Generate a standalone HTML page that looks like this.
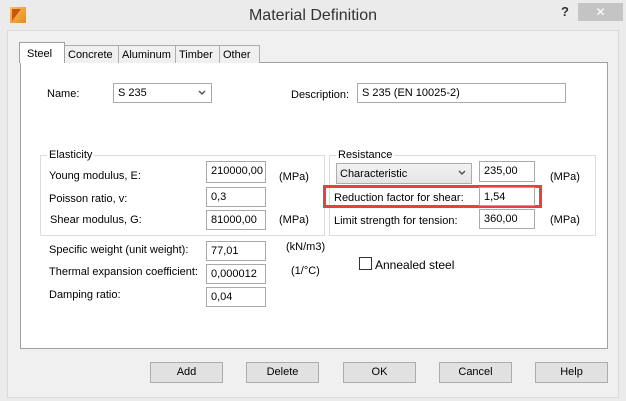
<!DOCTYPE html><html><head><style>
*{box-sizing:border-box}
body{margin:0;width:626px;height:401px;background:#ebebeb;font-family:"Liberation Sans",sans-serif;font-size:11px;color:#000;position:relative;overflow:hidden}
.a{position:absolute}
.in{position:absolute;background:#fff;border:1px solid #a9a9a9;height:20px;padding:3px 0 0 4px;font-size:11px}
.btn{position:absolute;top:362px;height:21px;width:73px;border:1px solid #adadad;background:#e1e1e1;text-align:center;line-height:19px}
.tab{position:absolute;top:45px;height:18px;border:1px solid #adadad;border-bottom:none;background:#f0f0f0;padding:3px 0 0 3px;font-size:11px}
.grp{position:absolute;border:1px solid #dcdcdc}
.gl{position:absolute;top:-7px;left:6px;background:#fff;padding:0 2px}
.chev{position:absolute;right:5px;top:6px}
</style></head><body>
<div class="a" style="left:10px;top:7px;width:16px;height:16px;background:linear-gradient(135deg,#f7c25a,#e88a1a)"></div>
<div class="a" style="left:12px;top:9px;width:0;height:0;border-left:9px solid #c8560e;border-bottom:12px solid transparent"></div>
<div class="a" style="left:0;width:626px;top:7px;text-align:center;font-size:16px;color:#333">Material Definition</div>
<div class="a" style="left:561px;top:4px;font-weight:bold;font-size:13px;color:#333">?</div>
<div class="a" style="left:578px;top:3px;width:45px;height:18px;background:#c4c4c4;color:#fff;text-align:center;font-size:12px;line-height:18px">✕</div>
<div class="a" style="left:7px;top:30px;width:612px;height:368px;border:1px solid #d9d9d9;background:#f0f0f0"></div>
<div class="a" style="left:20px;top:62px;width:588px;height:287px;background:#fff;border:1px solid #a0a0a0"></div>
<div class="tab" style="left:64px;width:55px">Concrete</div>
<div class="tab" style="left:118px;width:58px">Aluminum</div>
<div class="tab" style="left:175px;width:45px">Timber</div>
<div class="tab" style="left:219px;width:41px">Other</div>
<div class="a" style="left:19px;top:42px;width:46px;height:21px;background:#fff;border:1px solid #a0a0a0;border-bottom:none;padding:5px 0 0 7px">Steel</div>
<div class="a" style="left:47px;top:88px">Name:</div>
<div class="in" style="left:113px;top:83px;width:99px">S 235<svg class="chev" width="8" height="6"><path d="M1 1L4 4L7 1" stroke="#555" stroke-width="1.5" fill="none"/></svg></div>
<div class="a" style="left:291px;top:89px">Description:</div>
<div class="in" style="left:357px;top:83px;width:209px">S 235 (EN 10025-2)</div>
<div class="grp" style="left:40px;top:155px;width:285px;height:81px"><span class="gl">Elasticity</span></div>
<div class="a" style="left:49px;top:170px">Young modulus, E:</div>
<div class="a" style="left:49px;top:193px">Poisson ratio, v:</div>
<div class="a" style="left:50px;top:214px">Shear modulus, G:</div>
<div class="in" style="left:206px;top:161px;width:60px;height:22px">210000,00</div>
<div class="in" style="left:206px;top:187px;width:60px">0,3</div>
<div class="in" style="left:206px;top:210px;width:60px">81000,00</div>
<div class="a" style="left:279px;top:171px">(MPa)</div>
<div class="a" style="left:279px;top:214px">(MPa)</div>
<div class="a" style="left:49px;top:244px">Specific weight (unit weight):</div>
<div class="a" style="left:49px;top:266px">Thermal expansion coefficient:</div>
<div class="a" style="left:49px;top:289px">Damping ratio:</div>
<div class="in" style="left:206px;top:241px;width:60px">77,01</div>
<div class="in" style="left:206px;top:264px;width:60px">0,000012</div>
<div class="in" style="left:206px;top:287px;width:60px">0,04</div>
<div class="a" style="left:286px;top:241px">(kN/m3)</div>
<div class="a" style="left:291px;top:265px">(1/°C)</div>
<div class="grp" style="left:329px;top:155px;width:267px;height:81px"><span class="gl">Resistance</span></div>
<div class="a" style="left:336px;top:163px;width:136px;height:21px;border:1px solid #acacac;background:linear-gradient(#f2f2f2,#e5e5e5);padding:4px 0 0 3px">Characteristic<svg class="chev" width="8" height="6"><path d="M1 1L4 4L7 1" stroke="#555" stroke-width="1.5" fill="none"/></svg></div>
<div class="in" style="left:479px;top:161px;width:56px;height:21px">235,00</div>
<div class="a" style="left:550px;top:171px">(MPa)</div>
<div class="a" style="left:323px;top:185px;width:219px;height:23px;border:3px solid #e8413c"></div>
<div class="a" style="left:334px;top:192px">Reduction factor for shear:</div>
<div class="in" style="left:479px;top:187px;width:56px;height:19px">1,54</div>
<div class="a" style="left:334px;top:215px">Limit strength for tension:</div>
<div class="in" style="left:479px;top:209px;width:56px">360,00</div>
<div class="a" style="left:550px;top:214px">(MPa)</div>
<div class="a" style="left:359px;top:257px;width:13px;height:13px;border:1px solid #333;background:#fff"></div>
<div class="a" style="left:375px;top:258px;font-size:12px">Annealed steel</div>
<div class="btn" style="left:150px">Add</div>
<div class="btn" style="left:246px">Delete</div>
<div class="btn" style="left:343px">OK</div>
<div class="btn" style="left:439px">Cancel</div>
<div class="btn" style="left:535px">Help</div>
</body></html>
